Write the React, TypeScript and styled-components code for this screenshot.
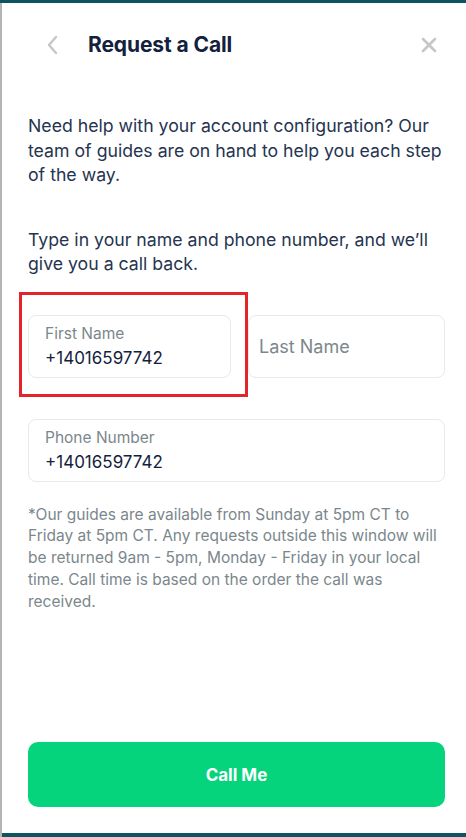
import React from "react";
import styled, { createGlobalStyle } from "styled-components";

const Global = createGlobalStyle`
  html, body { margin: 0; padding: 0; background: #ffffff; }
  * { box-sizing: border-box; }
  body { font-family: Inter, "Noto Sans", sans-serif; -webkit-font-smoothing: antialiased; }
`;

const Page = styled.div`
  display: flex;
  width: 466px;
  height: 837px;
  overflow: hidden;
`;

const Strip = styled.div`
  width: 2px;
  flex: none;
  background: #b4b4b4;
  border-top: 3px solid #0d5462;
`;

const Panel = styled.div`
  flex: 1;
  display: flex;
  flex-direction: column;
  background: #fff;
  border-top: 3px solid #0d5462;
  border-bottom: 4px solid #0d5462;
  padding: 0 21px 26px 26px;
`;

const Header = styled.div`
  display: flex;
  align-items: center;
  height: 83px;
`;

const IconButton = styled.button<{ $ml?: number; $mr?: number }>`
  border: 0;
  background: none;
  padding: 0;
  display: flex;
  align-items: center;
  justify-content: center;
  width: 24px;
  height: 24px;
  margin-left: ${(p) => p.$ml ?? 0}px;
  margin-right: ${(p) => p.$mr ?? 0}px;
  cursor: pointer;
`;

const Title = styled.h1`
  flex: 1;
  margin: 0 0 0 24px;
  font-size: 21px;
  font-weight: 700;
  color: #14213d;
  letter-spacing: -0.1px;
`;

const Paragraph = styled.p<{ $top?: number; $gap?: number }>`
  margin: ${(p) => p.$top ?? 0}px 0 ${(p) => p.$gap ?? 0}px;
  font-size: 17.7px;
  line-height: 24.5px;
  color: #263450;
`;

const Row = styled.div`
  display: flex;
  gap: 17px;
  margin-top: 38px;
`;

const FieldBox = styled.div<{ $width?: number; $empty?: boolean }>`
  position: relative;
  flex: ${(p) => (p.$width ? `0 0 ${p.$width}px` : "1 1 0")};
  height: 63px;
  border: 1px solid #e7e9ea;
  border-radius: 8px;
  display: flex;
  flex-direction: column;
  justify-content: ${(p) => (p.$empty ? "center" : "flex-start")};
  padding: ${(p) => (p.$empty ? "0 10px" : "8px 16px 0")};
`;

const Highlight = styled.div`
  position: absolute;
  left: -10px;
  top: -24px;
  right: -18px;
  bottom: -20px;
  border: 3px solid #e3242b;
  pointer-events: none;
`;

const Label = styled.span`
  font-size: 15.5px;
  line-height: 19px;
  color: #7b878c;
`;

const Placeholder = styled.span`
  font-size: 18px;
  color: #7b878c;
`;

const Value = styled.span`
  font-size: 17px;
  line-height: 24px;
  color: #14213d;
  margin-top: 3px;
`;

const PhoneBox = styled(FieldBox)`
  flex: none;
  margin-top: 41px;
`;

const Note = styled.p`
  margin: 22px 0 0;
  font-size: 15.5px;
  line-height: 21.75px;
  color: #7b878c;
`;

const Spacer = styled.div`
  flex: 1;
`;

const CallButton = styled.button`
  width: 100%;
  height: 65px;
  flex: none;
  border: 0;
  border-radius: 10px;
  background: #05d47c;
  color: #fff;
  font-family: Inter, "Noto Sans", sans-serif;
  font-size: 17px;
  font-weight: 700;
  cursor: pointer;
`;

export default function App() {
  return (
    <>
      <Global />
      <Page>
        <Strip />
        <Panel>
          <Header>
            <IconButton aria-label="Back" $ml={12}>
              <svg width="14" height="22" viewBox="0 0 14 22" fill="none">
                <path d="M11 3 L4 11 L11 19" stroke="#c4c6c8" strokeWidth="2.4" strokeLinecap="round" strokeLinejoin="round" />
              </svg>
            </IconButton>
            <Title>Request a Call</Title>
            <IconButton aria-label="Close" $mr={4}>
              <svg width="16" height="16" viewBox="0 0 16 16" fill="none">
                <path d="M2 2 L14 14 M14 2 L2 14" stroke="#c4c6c8" strokeWidth="2.6" strokeLinecap="round" />
              </svg>
            </IconButton>
          </Header>
          <Paragraph $top={28} $gap={40}>
            Need help with your account configuration? Our team of guides are on hand to help you each step of the way.
          </Paragraph>
          <Paragraph>
            Type in your name and phone number, and we’ll give you a call back.
          </Paragraph>
          <Row>
            <FieldBox $width={203}>
              <Highlight />
              <Label>First Name</Label>
              <Value>+14016597742</Value>
            </FieldBox>
            <FieldBox $empty>
              <Placeholder>Last Name</Placeholder>
            </FieldBox>
          </Row>
          <PhoneBox>
            <Label>Phone Number</Label>
            <Value>+14016597742</Value>
          </PhoneBox>
          <Note>
            *Our guides are available from Sunday at 5pm CT to Friday at 5pm CT. Any requests outside this window will be returned 9am - 5pm, Monday - Friday in your local time. Call time is based on the order the call was received.
          </Note>
          <Spacer />
          <CallButton>Call Me</CallButton>
        </Panel>
      </Page>
    </>
  );
}
